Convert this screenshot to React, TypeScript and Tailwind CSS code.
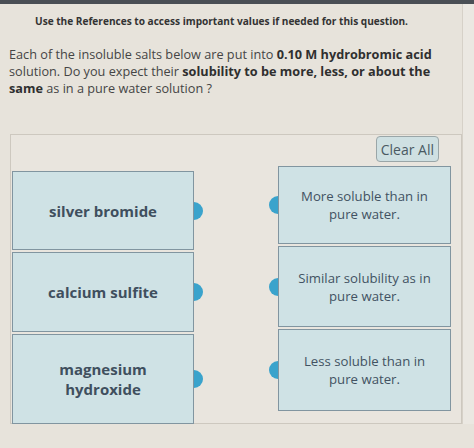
import React from "react";

const sources = [
  { label: ["silver bromide"], h: "h-[79px]" },
  { label: ["calcium sulfite"], h: "h-[80px]" },
  { label: ["magnesium", "hydroxide"], h: "h-[90px]" },
];

const targets = [
  { label: ["More soluble than in", "pure water."], h: "h-[78px]" },
  { label: ["Similar solubility as in", "pure water."], h: "h-[81px]" },
  { label: ["Less soluble than in", "pure water."], h: "h-[82px]" },
];

function Knob({ side }: { side: "left" | "right" }) {
  return (
    <span
      className={
        "absolute top-1/2 -translate-y-1/2 h-[18px] w-[9px] bg-[#3aa3cc] " +
        (side === "right" ? "-right-[10px] rounded-r-full" : "-left-[10px] rounded-l-full")
      }
    />
  );
}

export default function App() {
  return (
    <div
      className="relative w-[474px] h-[448px] overflow-hidden bg-[#e7e3db] text-[#3a3a3a]"
      style={{ fontFamily: '"Open Sans", "Noto Sans", sans-serif' }}
    >
      <div className="h-[4px] bg-[#4a4f55]" />
      <div className="flex">
        <div className="w-[463px] border-r border-[#d6d1c8]">
          <p className="mt-[10px] pl-[35px] text-[10.1px] leading-[14px] font-bold text-[#333]">
            Use the References to access important values if needed for this question.
          </p>
          <p className="mt-[18px] pl-[9px] text-[12.7px] leading-[17px] text-[#454545]">
            Each of the insoluble salts below are put into <b className="text-[#2f2f2f]">0.10 M hydrobromic acid</b>
            <br />
            solution. Do you expect their <b className="text-[#2f2f2f]">solubility to be more, less, or about the</b>
            <br />
            <b className="text-[#2f2f2f]">same</b> as in a pure water solution ?
          </p>

          <div className="mt-[37px] ml-[10px] w-[452px] h-[290px] border border-[#cdc8bf] bg-[#e9e5de]">
            <div className="flex justify-end pr-[22px]">
              <button className="mt-[1px] h-[26px] px-[4px] rounded-[4px] border border-[#9aa6a8] bg-[#cfe0e2] text-[14px] text-[#4a5a62]">
                Clear All
              </button>
            </div>
            <div className="flex">
              <div className="ml-[1px] mt-[9px] w-[182px] flex flex-col gap-[2px]">
                {sources.map((s) => (
                  <div
                    key={s.label.join()}
                    className={
                      "relative flex flex-col items-center justify-center border border-[#8195a0] bg-[#cfe2e5] " + s.h
                    }
                  >
                    {s.label.map((l) => (
                      <span key={l} className="text-[15px] leading-[20px] font-bold text-[#3f4f5e]">
                        {l}
                      </span>
                    ))}
                    <Knob side="right" />
                  </div>
                ))}
              </div>
              <div className="ml-[84px] mt-[4px] w-[173px] flex flex-col gap-[2px]">
                {targets.map((t) => (
                  <div
                    key={t.label.join()}
                    className={
                      "relative flex flex-col items-center justify-center border border-[#8195a0] bg-[#cfe2e5] " + t.h
                    }
                  >
                    {t.label.map((l) => (
                      <span key={l} className="text-[13.2px] leading-[18px] text-[#425262]">
                        {l}
                      </span>
                    ))}
                    <Knob side="left" />
                  </div>
                ))}
              </div>
            </div>
          </div>
        </div>
        <div className="flex-1 bg-[#ebe8e2]" />
      </div>
    </div>
  );
}
